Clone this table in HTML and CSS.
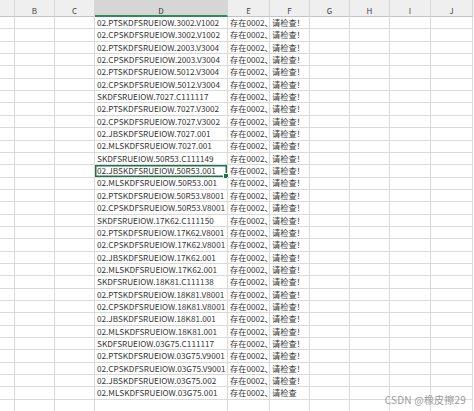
FILE: index.html
```html
<!DOCTYPE html>
<html lang="zh-CN">
<head>
<meta charset="utf-8">
<title>Sheet</title>
<link rel="stylesheet" href="styles.css">
</head>
<body>
<div class="sheet">
  <div class="row head">
    <div class="c"></div><div class="c">B</div><div class="c">C</div><div class="c sel">D</div><div class="c">E</div><div class="c">F</div><div class="c">G</div><div class="c">H</div><div class="c">I</div><div class="c">J</div>
  </div>
  <div class="row"><div class="c"></div><div class="c"></div><div class="c"></div><div class="c">02.PTSKDFSRUEIOW.3002.V1002</div><div class="c">存在0002、</div><div class="c">请检查！</div><div class="c"></div><div class="c"></div><div class="c"></div><div class="c"></div></div>
  <div class="row"><div class="c"></div><div class="c"></div><div class="c"></div><div class="c">02.CPSKDFSRUEIOW.3002.V1002</div><div class="c">存在0002、</div><div class="c">请检查！</div><div class="c"></div><div class="c"></div><div class="c"></div><div class="c"></div></div>
  <div class="row"><div class="c"></div><div class="c"></div><div class="c"></div><div class="c">02.PTSKDFSRUEIOW.2003.V3004</div><div class="c">存在0002、</div><div class="c">请检查！</div><div class="c"></div><div class="c"></div><div class="c"></div><div class="c"></div></div>
  <div class="row"><div class="c"></div><div class="c"></div><div class="c"></div><div class="c">02.CPSKDFSRUEIOW.2003.V3004</div><div class="c">存在0002、</div><div class="c">请检查！</div><div class="c"></div><div class="c"></div><div class="c"></div><div class="c"></div></div>
  <div class="row"><div class="c"></div><div class="c"></div><div class="c"></div><div class="c">02.PTSKDFSRUEIOW.5012.V3004</div><div class="c">存在0002、</div><div class="c">请检查！</div><div class="c"></div><div class="c"></div><div class="c"></div><div class="c"></div></div>
  <div class="row"><div class="c"></div><div class="c"></div><div class="c"></div><div class="c">02.CPSKDFSRUEIOW.5012.V3004</div><div class="c">存在0002、</div><div class="c">请检查！</div><div class="c"></div><div class="c"></div><div class="c"></div><div class="c"></div></div>
  <div class="row"><div class="c"></div><div class="c"></div><div class="c"></div><div class="c">SKDFSRUEIOW.7027.C111117</div><div class="c">存在0002、</div><div class="c">请检查！</div><div class="c"></div><div class="c"></div><div class="c"></div><div class="c"></div></div>
  <div class="row"><div class="c"></div><div class="c"></div><div class="c"></div><div class="c">02.PTSKDFSRUEIOW.7027.V3002</div><div class="c">存在0002、</div><div class="c">请检查！</div><div class="c"></div><div class="c"></div><div class="c"></div><div class="c"></div></div>
  <div class="row"><div class="c"></div><div class="c"></div><div class="c"></div><div class="c">02.CPSKDFSRUEIOW.7027.V3002</div><div class="c">存在0002、</div><div class="c">请检查！</div><div class="c"></div><div class="c"></div><div class="c"></div><div class="c"></div></div>
  <div class="row"><div class="c"></div><div class="c"></div><div class="c"></div><div class="c">02.JBSKDFSRUEIOW.7027.001</div><div class="c">存在0002、</div><div class="c">请检查！</div><div class="c"></div><div class="c"></div><div class="c"></div><div class="c"></div></div>
  <div class="row"><div class="c"></div><div class="c"></div><div class="c"></div><div class="c">02.MLSKDFSRUEIOW.7027.001</div><div class="c">存在0002、</div><div class="c">请检查！</div><div class="c"></div><div class="c"></div><div class="c"></div><div class="c"></div></div>
  <div class="row"><div class="c"></div><div class="c"></div><div class="c"></div><div class="c">SKDFSRUEIOW.50R53.C111149</div><div class="c">存在0002、</div><div class="c">请检查！</div><div class="c"></div><div class="c"></div><div class="c"></div><div class="c"></div></div>
  <div class="row"><div class="c"></div><div class="c"></div><div class="c"></div><div class="c active">02.JBSKDFSRUEIOW.50R53.001<span class="handle"></span></div><div class="c">存在0002、</div><div class="c">请检查！</div><div class="c"></div><div class="c"></div><div class="c"></div><div class="c"></div></div>
  <div class="row"><div class="c"></div><div class="c"></div><div class="c"></div><div class="c">02.MLSKDFSRUEIOW.50R53.001</div><div class="c">存在0002、</div><div class="c">请检查！</div><div class="c"></div><div class="c"></div><div class="c"></div><div class="c"></div></div>
  <div class="row"><div class="c"></div><div class="c"></div><div class="c"></div><div class="c">02.PTSKDFSRUEIOW.50R53.V8001</div><div class="c">存在0002、</div><div class="c">请检查！</div><div class="c"></div><div class="c"></div><div class="c"></div><div class="c"></div></div>
  <div class="row"><div class="c"></div><div class="c"></div><div class="c"></div><div class="c">02.CPSKDFSRUEIOW.50R53.V8001</div><div class="c">存在0002、</div><div class="c">请检查！</div><div class="c"></div><div class="c"></div><div class="c"></div><div class="c"></div></div>
  <div class="row"><div class="c"></div><div class="c"></div><div class="c"></div><div class="c">SKDFSRUEIOW.17K62.C111150</div><div class="c">存在0002、</div><div class="c">请检查！</div><div class="c"></div><div class="c"></div><div class="c"></div><div class="c"></div></div>
  <div class="row"><div class="c"></div><div class="c"></div><div class="c"></div><div class="c">02.PTSKDFSRUEIOW.17K62.V8001</div><div class="c">存在0002、</div><div class="c">请检查！</div><div class="c"></div><div class="c"></div><div class="c"></div><div class="c"></div></div>
  <div class="row"><div class="c"></div><div class="c"></div><div class="c"></div><div class="c">02.CPSKDFSRUEIOW.17K62.V8001</div><div class="c">存在0002、</div><div class="c">请检查！</div><div class="c"></div><div class="c"></div><div class="c"></div><div class="c"></div></div>
  <div class="row"><div class="c"></div><div class="c"></div><div class="c"></div><div class="c">02.JBSKDFSRUEIOW.17K62.001</div><div class="c">存在0002、</div><div class="c">请检查！</div><div class="c"></div><div class="c"></div><div class="c"></div><div class="c"></div></div>
  <div class="row"><div class="c"></div><div class="c"></div><div class="c"></div><div class="c">02.MLSKDFSRUEIOW.17K62.001</div><div class="c">存在0002、</div><div class="c">请检查！</div><div class="c"></div><div class="c"></div><div class="c"></div><div class="c"></div></div>
  <div class="row"><div class="c"></div><div class="c"></div><div class="c"></div><div class="c">SKDFSRUEIOW.18K81.C111138</div><div class="c">存在0002、</div><div class="c">请检查！</div><div class="c"></div><div class="c"></div><div class="c"></div><div class="c"></div></div>
  <div class="row"><div class="c"></div><div class="c"></div><div class="c"></div><div class="c">02.PTSKDFSRUEIOW.18K81.V8001</div><div class="c">存在0002、</div><div class="c">请检查！</div><div class="c"></div><div class="c"></div><div class="c"></div><div class="c"></div></div>
  <div class="row"><div class="c"></div><div class="c"></div><div class="c"></div><div class="c">02.CPSKDFSRUEIOW.18K81.V8001</div><div class="c">存在0002、</div><div class="c">请检查！</div><div class="c"></div><div class="c"></div><div class="c"></div><div class="c"></div></div>
  <div class="row"><div class="c"></div><div class="c"></div><div class="c"></div><div class="c">02.JBSKDFSRUEIOW.18K81.001</div><div class="c">存在0002、</div><div class="c">请检查！</div><div class="c"></div><div class="c"></div><div class="c"></div><div class="c"></div></div>
  <div class="row"><div class="c"></div><div class="c"></div><div class="c"></div><div class="c">02.MLSKDFSRUEIOW.18K81.001</div><div class="c">存在0002、</div><div class="c">请检查！</div><div class="c"></div><div class="c"></div><div class="c"></div><div class="c"></div></div>
  <div class="row"><div class="c"></div><div class="c"></div><div class="c"></div><div class="c">SKDFSRUEIOW.03G75.C111117</div><div class="c">存在0002、</div><div class="c">请检查！</div><div class="c"></div><div class="c"></div><div class="c"></div><div class="c"></div></div>
  <div class="row"><div class="c"></div><div class="c"></div><div class="c"></div><div class="c">02.PTSKDFSRUEIOW.03G75.V9001</div><div class="c">存在0002、</div><div class="c">请检查！</div><div class="c"></div><div class="c"></div><div class="c"></div><div class="c"></div></div>
  <div class="row"><div class="c"></div><div class="c"></div><div class="c"></div><div class="c">02.CPSKDFSRUEIOW.03G75.V9001</div><div class="c">存在0002、</div><div class="c">请检查！</div><div class="c"></div><div class="c"></div><div class="c"></div><div class="c"></div></div>
  <div class="row"><div class="c"></div><div class="c"></div><div class="c"></div><div class="c">02.JBSKDFSRUEIOW.03G75.002</div><div class="c">存在0002、</div><div class="c">请检查！</div><div class="c"></div><div class="c"></div><div class="c"></div><div class="c"></div></div>
  <div class="row"><div class="c"></div><div class="c"></div><div class="c"></div><div class="c">02.MLSKDFSRUEIOW.03G75.001</div><div class="c">存在0002、</div><div class="c">请检查</div><div class="c"></div><div class="c"></div><div class="c"></div><div class="c"></div></div>
  <div class="row"><div class="c"></div><div class="c"></div><div class="c"></div><div class="c"></div><div class="c"></div><div class="c"></div><div class="c"></div><div class="c"></div><div class="c"></div><div class="c"></div></div>
  <div class="watermark">CSDN @橡皮擦29</div>
</div>
</body>
</html>
```
FILE: styles.css
```css
html, body {
  margin: 0;
  padding: 0;
  background: #ffffff;
}

.sheet {
  position: relative;
  width: 474px;
  height: 411px;
  overflow: hidden;
  font-family: "Noto Sans CJK SC", "Noto Sans", sans-serif;
  color: #363636;
}

.row {
  display: grid;
  grid-template-columns: 15px 40px 40px 133px 42px 40px 40px 40px 41px 42px 1px;
  height: 12.35px;
}

.c {
  position: relative;
  box-sizing: border-box;
  border-right: 1px solid #dadada;
  border-bottom: 1px solid #dadada;
  font-size: 8.2px;
  line-height: 11.4px;
  padding-left: 2px;
  white-space: nowrap;
  overflow: visible;
}

.head {
  height: 17px;
  background: #efefef;
}

.head .c {
  font-size: 8px;
  line-height: 8px;
  padding: 7px 0 0 0;
  text-align: center;
  color: #444;
  border-right: 1px solid #d6d6d6;
  border-bottom: 1px solid #c4c4c4;
}

.head .sel {
  background: #d6d6d6;
  border-bottom: 2px solid #2e8a57;
  color: #333;
}

.active {
  box-shadow: inset 0 0 0 1.5px #217346;
}

.handle {
  position: absolute;
  right: -2px;
  bottom: -2px;
  width: 4px;
  height: 4px;
  background: #217346;
  border: 1px solid #fff;
}

.watermark {
  position: absolute;
  right: 8px;
  bottom: 4px;
  font-size: 10px;
  color: #9a9a9a;
  letter-spacing: 0.2px;
}
```
